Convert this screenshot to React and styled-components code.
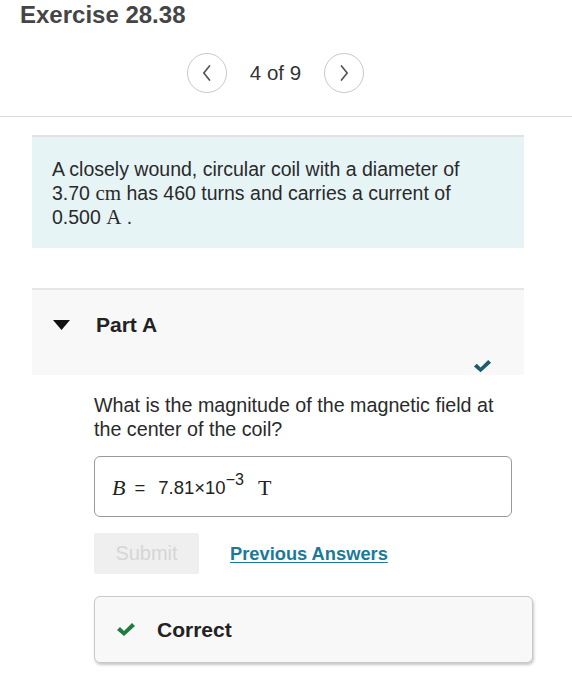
import React from 'react'
import styled, { createGlobalStyle } from 'styled-components'

/* Global */
const GlobalStyle = createGlobalStyle`
  body {
    margin: 0;
    background: #fff;
    font-family: "Liberation Sans", Arial, sans-serif;
    color: #222;
  }
`

/* Styled */
const Page = styled.div`
  width: 572px;
  padding-bottom: 30px;
`

const Title = styled.h1`
  margin: 0;
  padding: 0 0 0 20px;
  font-size: 24px;
  line-height: 30px;
  font-weight: 700;
  color: #454545;
`

const Pager = styled.div`
  display: flex;
  justify-content: center;
  align-items: center;
  gap: 23px;
  height: 86px;
  padding-right: 21px;
  border-bottom: 1px solid #dcdcdc;
  .count {
    font-size: 20.5px;
    color: #333;
  }
`

const CircleButton = styled.button`
  width: 40px;
  height: 40px;
  border-radius: 50%;
  border: 1px solid #c8c8c8;
  background: #fff;
  display: flex;
  align-items: center;
  justify-content: center;
  padding: 0;
  color: #555;
  cursor: pointer;
`

const Problem = styled.div`
  margin: 18px 48px 0 32px;
  border-top: 2px solid #e2e2e2;
  background: #e7f4f6;
  padding: 20px 20px 19px;
  font-size: 19.5px;
  line-height: 24px;
  color: #2a2a2a;
  .nobr {
    white-space: nowrap;
  }
`

const Math = styled.span`
  font-family: "Liberation Serif", "DejaVu Serif", serif;
  font-size: ${(p) => p.size || 20}px;
  font-style: ${(p) => (p.italic ? 'italic' : 'normal')};
`

const Part = styled.section`
  margin: 40px 48px 0 32px;
`

const PartHeader = styled.div`
  height: 87px;
  border-top: 2px solid #e6e6e6;
  background: #f8f8f8;
  display: flex;
  flex-direction: column;
  justify-content: space-between;
  padding: 23px 32px 2px 21px;
  box-sizing: border-box;
`

const PartTitle = styled.div`
  display: flex;
  align-items: center;
  gap: 26px;
  font-size: 21px;
  font-weight: 700;
  color: #222;
`

const CheckSlot = styled.div`
  align-self: flex-end;
  line-height: 0;
`

const PartBody = styled.div`
  padding: 18px 0 0 62px;
`

const Question = styled.p`
  margin: 0;
  max-width: 418px;
  font-size: 19.7px;
  line-height: 24px;
  color: #2a2a2a;
`

const AnswerBox = styled.div`
  margin-top: 15px;
  width: 418px;
  height: 61px;
  box-sizing: border-box;
  border: 1px solid #9a9a9a;
  border-radius: 6px;
  display: flex;
  align-items: center;
  padding: 2px 0 0 17px;
  font-size: 18.5px;
  color: #222;
  .eq {
    margin: 0 13px 0 9px;
  }
  .num {
    white-space: nowrap;
  }
  sup {
    font-size: 16px;
    vertical-align: 0;
    position: relative;
    top: -9px;
  }
`

const Actions = styled.div`
  display: flex;
  align-items: center;
  gap: 31px;
  margin-top: 16px;
`

const SubmitButton = styled.button`
  width: 105px;
  height: 41px;
  border: none;
  border-radius: 2px;
  background: #efefef;
  color: #d6d6d6;
  font-family: inherit;
  font-size: 20px;
`

const Link = styled.a`
  font-size: 18.3px;
  font-weight: 700;
  color: #1b7a97;
  text-decoration: underline;
  text-underline-offset: 2px;
`

const Feedback = styled.div`
  margin-top: 22px;
  width: 439px;
  height: 67px;
  box-sizing: border-box;
  border: 1px solid #c9c9c9;
  border-radius: 6px;
  background: #f8f8f8;
  box-shadow: 1px 2px 3px rgba(0, 0, 0, 0.22);
  display: flex;
  align-items: center;
  gap: 21px;
  padding: 0 0 0 21px;
  font-size: 21px;
  font-weight: 700;
  color: #222;
`

/* Icons */
const Chevron = ({ dir }) => (
  <svg width='12' height='20' viewBox='0 0 12 20' fill='none'>
    <path
      d={dir === 'left' ? 'M8.5 3 L2.8 10 L8.5 17' : 'M3.5 3 L9.2 10 L3.5 17'}
      stroke='currentColor'
      strokeWidth='1.7'
      strokeLinecap='round'
      strokeLinejoin='round'
    />
  </svg>
)

const Check = ({ color, size = 20 }) => (
  <svg width={size} height={size * 0.75} viewBox='0 0 20 15'>
    <path d='M1 8 L4 5 L8 9 L16 1 L19 4 L8 14 Z' fill={color} />
  </svg>
)

const Triangle = () => (
  <svg width='17' height='10' viewBox='0 0 17 10'>
    <path d='M0 0 H17 L8.5 10 Z' fill='#111' />
  </svg>
)

const App = () => {
  return (
    <Page>
      <GlobalStyle />
      <Title>Exercise 28.38</Title>
      <Pager>
        <CircleButton aria-label='previous'>
          <Chevron dir='left' />
        </CircleButton>
        <span className='count'>4 of 9</span>
        <CircleButton aria-label='next'>
          <Chevron dir='right' />
        </CircleButton>
      </Pager>

      <Problem>
        A closely wound, circular coil with a diameter of{' '}
        <span className='nobr'>
          3.70 <Math size={21}>cm</Math>
        </span>{' '}
        has 460 turns and carries a current of{' '}
        <span className='nobr'>
          0.500 <Math size={21}>A</Math>
        </span>{' '}
        .
      </Problem>

      <Part>
        <PartHeader>
          <PartTitle>
            <Triangle />
            Part A
          </PartTitle>
          <CheckSlot>
            <Check color='#1b5c6d' size={19} />
          </CheckSlot>
        </PartHeader>
        <PartBody>
          <Question>What is the magnitude of the magnetic field at the center of the coil?</Question>
          <AnswerBox>
            <Math italic size={22}>B</Math>
            <span className='eq'>=</span>
            <span className='num'>
              7.81×10<sup>−3</sup>
            </span>
            <Math size={22} style={{ marginLeft: 14 }}>T</Math>
          </AnswerBox>
          <Actions>
            <SubmitButton disabled>Submit</SubmitButton>
            <Link href='#'>Previous Answers</Link>
          </Actions>
          <Feedback>
            <Check color='#1e7d3c' size={20} />
            Correct
          </Feedback>
        </PartBody>
      </Part>
    </Page>
  )
}

export default App
